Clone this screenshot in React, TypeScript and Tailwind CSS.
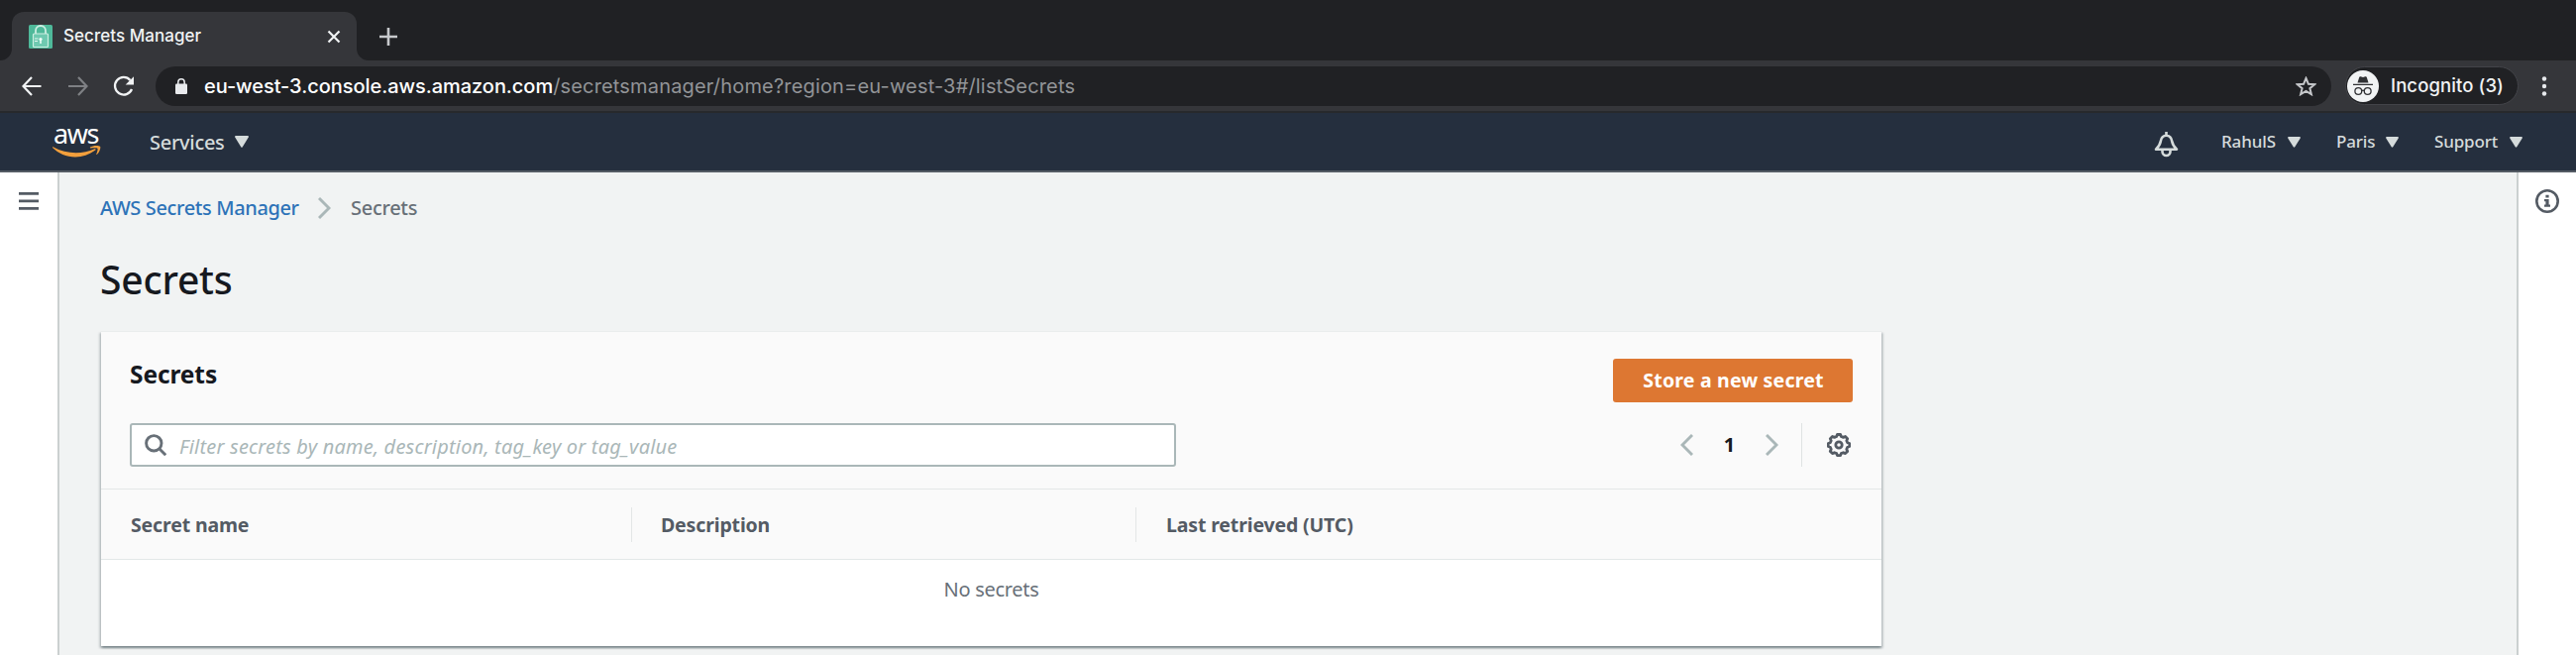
import type { ReactNode } from "react";

function Caret({ className = "" }: { className?: string }) {
  return (
    <svg viewBox="0 0 14 12" className={`shrink-0 ${className}`} fill="#d5dbdb">
      <path d="M1 0h12c.9 0 1.2.8.8 1.5L7.8 11.3c-.4.7-1.2.7-1.6 0L.2 1.5C-.2.8.1 0 1 0z" />
    </svg>
  );
}

function Chevron({ left = false }: { left?: boolean }) {
  return (
    <svg viewBox="0 0 13 22" className="h-[22px] w-[13px] shrink-0" fill="none" stroke="#aab7b8" strokeWidth="2.9">
      <path d={left ? "M12 1L2 11l10 10" : "M1 1l10 10L1 21"} />
    </svg>
  );
}

function TabStrip() {
  return (
    <div className="flex h-[61px] items-end bg-[#202124]">
      <div className="h-3 w-3 bg-[#35363a]">
        <div className="h-3 w-3 rounded-br-xl bg-[#202124]" />
      </div>
      <div className="flex h-[49px] w-[348px] items-center rounded-t-xl bg-[#35363a] pl-[17px] pr-4">
        <svg viewBox="0 0 24 24" className="h-6 w-6 shrink-0" fill="none">
          <rect width="24" height="24" rx="1.5" fill="#4fb99a" />
          <path d="M7 9V6a5 5 0 0 1 10 0v3" stroke="#cdeee2" strokeWidth="1.8" />
          <rect x="4.5" y="9" width="15" height="13.5" rx="1" fill="#6fc9b0" stroke="#cdeee2" strokeWidth="1.2" />
          <path d="M6 14h3.5M6 16.5h3" stroke="#e4f7f0" strokeWidth="1.1" />
          <path d="M12 14.5V19" stroke="#f2fffa" strokeWidth="1.5" />
          <circle cx="12" cy="14.5" r="1.6" fill="#f2fffa" />
        </svg>
        <span className="ml-[11px] grow whitespace-nowrap text-[17px] font-medium tracking-[0.05px] text-[#f1f3f4]">Secrets Manager</span>
        <svg viewBox="0 0 14 14" className="h-[14px] w-[14px] shrink-0" stroke="#f1f3f4" strokeWidth="2.2">
          <path d="M1.5 1.5l11 11M12.5 1.5l-11 11" />
        </svg>
      </div>
      <div className="h-3 w-3 bg-[#35363a]">
        <div className="h-3 w-3 rounded-bl-xl bg-[#202124]" />
      </div>
      <div className="flex h-[49px] items-center pl-[11px]">
        <svg viewBox="0 0 18 18" className="h-[18px] w-[18px]" stroke="#c7c9cc" strokeWidth="2.6">
          <path d="M9 0v18M0 9h18" />
        </svg>
      </div>
    </div>
  );
}

function Toolbar() {
  return (
    <div className="flex h-[53px] items-center border-b-2 border-[#27292c] bg-[#35363a] pl-[22px]">
      <svg viewBox="0 0 20 20" className="h-5 w-5 shrink-0" fill="none" stroke="#f1f3f4" strokeWidth="2.2">
        <path d="M19.5 10H2M10 1l-8.5 9 8.5 9" />
      </svg>
      <svg viewBox="0 0 20 20" className="ml-[27px] h-5 w-5 shrink-0" fill="none" stroke="#7e8084" strokeWidth="2.2">
        <path d="M0 10h18M10 1l8.5 9-8.5 9" />
      </svg>
      <svg viewBox="0 0 22 22" className="ml-[25px] h-[22px] w-[22px] shrink-0" fill="none">
        <path d="M19 14a8.8 8.8 0 1 1-1.500-9" stroke="#f1f3f4" strokeWidth="2.3" />
        <path d="M21 1.2v8.3h-8.300z" fill="#f1f3f4" />
      </svg>
      <div className="ml-[21px] flex h-10 w-[2196px] items-center rounded-full bg-[#202124] pl-5 pr-[15px]">
        <svg viewBox="0 0 12 16" className="h-4 w-3 shrink-0">
          <rect y="5.5" width="12" height="10.5" rx="1.3" fill="#e8eaed" />
          <path d="M2.8 6V4a3.2 3.2 0 0 1 6.400 0v2" fill="none" stroke="#e8eaed" strokeWidth="1.5" />
        </svg>
        <span className="ml-[17px] grow whitespace-nowrap pt-px text-xl">
          <span className="font-medium tracking-[-0.05px] text-white">eu-west-3.console.aws.amazon.com</span>
          <span className="tracking-[0.17px] text-[#929497]">/secretsmanager/home?region=eu-west-3#/listSecrets</span>
        </span>
        <svg viewBox="0 0 21 20" className="h-5 w-[21px] shrink-0" fill="none" stroke="#c5c7ca" strokeWidth="2">
          <path d="M10.500 2l2.400 5.700 6.200.5-4.700 4 1.500 6-5.400-3.200-5.400 3.200 1.500-6-4.700-4 6.200-.5z" />
        </svg>
      </div>
      <div className="ml-[14px] flex h-[39px] w-[175px] items-center rounded-full border border-[#434449] bg-[#202124] pl-px">
        <svg viewBox="0 0 32 32" className="h-8 w-8 shrink-0">
          <circle cx="16" cy="16" r="16" fill="#f1f3f4" />
          <path d="M10.500 12.500l1.700-5.500c.2-.7.9-1 1.500-.7l2.300.7 2.300-.7c.6-.3 1.300 0 1.500.7l1.700 5.500zM6 13.700h20v1.300H6z" fill="#303134" />
          <g fill="none" stroke="#303134" strokeWidth="1.3">
            <circle cx="11.3" cy="21" r="3.4" />
            <circle cx="20.7" cy="21" r="3.4" />
            <path d="M14.7 20.7q1.300-1 2.600 0" />
          </g>
        </svg>
        <span className="ml-3 whitespace-nowrap pt-px text-[18.5px] font-medium tracking-[0.1px] text-[#f1f3f4]">Incognito (3)</span>
      </div>
      <svg viewBox="0 0 4 20" className="ml-6 h-5 w-1 shrink-0 overflow-visible" fill="#e8eaed">
        <circle cx="2" cy="2.5" r="2.2" />
        <circle cx="2" cy="10" r="2.2" />
        <circle cx="2" cy="17.5" r="2.2" />
      </svg>
    </div>
  );
}

function NavMenu({ label, className }: { label: string; className: string }) {
  return (
    <div className={`flex shrink-0 items-center justify-between text-[17px] font-medium text-[#d5dbdb] ${className}`}>
      <span className="tracking-[-0.15px]">{label}</span>
      <Caret className="h-[11px] w-[13px]" />
    </div>
  );
}

function AwsNav() {
  return (
    <div className="flex h-[60px] items-center border-b-2 border-[#545b64] bg-[#252f3e] pl-[53px] pr-[54px]">
      <div className="flex w-[49px] flex-col pb-[7px]">
        <span className="pl-px text-[27px] leading-[30px] tracking-[-1.4px] text-white">aws</span>
        <svg viewBox="0 0 49 12" className="-mt-[3px] h-3 w-[49px]" fill="#f29f3c">
          <path d="M.5 1.200C14 8.500 29 9 42.500 3.300c1-.4 1.700.6.8 1.200C37 9.200 30 11.500 23 11.500 14 11.500 6 7.800 0 2c-.4-.5 0-1 .5-.8z" />
          <path d="M38 1.600c2.800-1.800 8-2 10-.9.900.5.100 5.200-3 8.100-.5.400-1 .2-.7-.4.700-1.600 1.700-4.900 1.100-5.700-.8-.9-4.400-.5-6.600-.3-.8.100-1.200-.4-.8-.8z" />
        </svg>
      </div>
      <span className="ml-[49px] w-[76px] whitespace-nowrap pt-0.5 text-xl font-medium tracking-[-0.3px] text-[#d5dbdb]">Services</span>
      <Caret className="ml-[10px] h-3 w-[14px]" />
      <div className="grow" />
      <svg viewBox="0 0 25 26" className="mt-[5px] h-[26px] w-[25px] shrink-0" fill="none" stroke="#d5dbdb" strokeWidth="2.6" strokeLinejoin="round">
        <path d="M12.500 0v4M2 17.700c2.900-2.700 4.200-4.700 4.800-8.200.6-3.400 2.600-5.700 5.700-5.700s5.100 2.300 5.700 5.700c.6 3.500 1.900 5.500 4.800 8.200zM8.500 18.500v1.500a4 4 0 0 0 8 0v-1.500" />
      </svg>
      <NavMenu label="RahulS" className="ml-[43px] w-[80px]" />
      <NavMenu label="Paris" className="ml-[36px] w-[63px]" />
      <NavMenu label="Support" className="ml-[36px] w-[89px]" />
    </div>
  );
}

function HeadCell({ children, className }: { children: ReactNode; className: string }) {
  return (
    <div className={`flex h-[35px] items-center text-[19.5px] font-bold tracking-[-0.15px] text-[#545b64] ${className}`}>
      {children}
    </div>
  );
}

function SecretsCard() {
  return (
    <div className="ml-[42px] h-[318px] w-[1797px] border-t border-[#eaeded] bg-white shadow-[0_2px_2px_0_rgba(0,28,36,0.3),2px_2px_2px_0_rgba(0,28,36,0.15),-2px_2px_2px_0_rgba(0,28,36,0.15)]">
      <div className="h-[159px] border-b border-[#e3e8e8] bg-[#fafafa] px-[29px]">
        <div className="flex h-[92px] items-start justify-between pt-[27px]">
          <h2 className="pt-px text-[24.5px] font-bold leading-[30px] tracking-[-0.1px] text-[#16191f]">Secrets</h2>
          <button className="h-11 w-[242px] rounded-[3px] bg-[#dd7732] pl-px text-[19.5px] font-bold tracking-[0.2px] text-white">
            Store a new secret
          </button>
        </div>
        <div className="flex h-11 items-center">
          <div className="flex h-11 w-[1056px] items-center rounded-[3px] border-2 border-[#aab7b8] bg-white pl-[13px]">
            <svg viewBox="0 0 22 22" className="h-[22px] w-[22px] shrink-0" fill="none" stroke="#687078" strokeWidth="2.9">
              <circle cx="9.3" cy="9.3" r="7.7" />
              <path d="M14.5 14.5l6.700 6.700" />
            </svg>
            <span className="ml-[13px] mt-1 whitespace-nowrap text-xl italic tracking-[0.2px] text-[#aab7b8]">
              Filter secrets by name, description, tag_key or tag_value
            </span>
          </div>
          <div className="grow" />
          <Chevron left />
          <span className="w-[73px] text-center text-xl font-bold text-[#16191f]">1</span>
          <Chevron />
          <div className="ml-[23px] h-11 w-px bg-[#dfe3e3]" />
          <svg viewBox="0 0 24 24" className="ml-[25px] mr-[2px] h-6 w-6 shrink-0" fill="none" stroke="#545b64" strokeWidth="2.8" strokeLinejoin="round">
            <path d="M10.400 1.500h3.200l.7 2 2.200.9 2-.9 2.200 2.200-.9 2 .9 2.100 2 .7v3l-2 .8-.9 2.100.9 2-2.200 2.200-2-.9-2.200.9-.7 2h-3.200l-.7-2-2.200-.9-2 .9-2.200-2.200.9-2-.9-2.100-2-.8v-3l2-.7.9-2.100-.9-2 2.200-2.200 2 .9 2.200-.9z" />
            <circle cx="12" cy="12" r="3.2" />
          </svg>
        </div>
      </div>
      <div className="flex h-[71px] items-center border-b border-[#e3e8e8] bg-[#fafafa]">
        <HeadCell className="w-[536px] border-r border-[#e3e6e6] pl-[30px] pt-px">Secret name</HeadCell>
        <HeadCell className="w-[509px] border-r border-[#e3e6e6] pl-[29px] pt-px">Description</HeadCell>
        <HeadCell className="grow pl-[30px] pt-px">Last retrieved (UTC)</HeadCell>
      </div>
      <p className="pt-4 text-center text-xl leading-[28px] tracking-[-0.3px] text-[#687078]">No secrets</p>
    </div>
  );
}

export default function App() {
  return (
    <div className="h-[661px] w-[2600px] overflow-hidden bg-[#f1f3f3] font-['Noto_Sans',sans-serif]">
      <div className="font-['Inter',sans-serif]">
        <TabStrip />
        <Toolbar />
      </div>
      <AwsNav />
      <div className="flex h-[487px]">
        <div className="w-[60px] shrink-0 border-r-2 border-[#cbd0d0] bg-white pl-[19px] pt-5">
          <svg viewBox="0 0 20 18" className="h-[18px] w-5" fill="#545b64">
            <path d="M0 0h20v2.800H0zM0 7.500h20v2.800H0zM0 15h20v2.800H0z" />
          </svg>
        </div>
        <main className="grow">
          <div className="flex h-[72px] items-center pl-[41px] text-xl font-medium">
            <span className="w-[203px] whitespace-nowrap tracking-[-0.38px] text-[#2e73b8]">AWS Secrets Manager</span>
            <span className="ml-[17px]">
              <Chevron />
            </span>
            <span className="ml-[20px] tracking-[-0.3px] text-[#687078]">Secrets</span>
          </div>
          <h1 className="h-[88px] pl-[41px] pt-[14px] text-[39px] font-medium leading-[44px] tracking-[-0.2px] text-[#16191f]">Secrets</h1>
          <SecretsCard />
        </main>
        <div className="w-[60px] shrink-0 border-l-2 border-[#cbd0d0] bg-white pl-[17px] pt-[17px]">
          <svg viewBox="0 0 24 24" className="h-6 w-6" fill="none">
            <circle cx="12" cy="12" r="10.7" stroke="#545b64" strokeWidth="2.6" />
            <path d="M10.400 5.700h3.200v2.800h-3.200zM9 10h4.600v5.500H15v2.300H9v-2.300h1.400v-3.200H9z" fill="#545b64" />
          </svg>
        </div>
      </div>
    </div>
  );
}
